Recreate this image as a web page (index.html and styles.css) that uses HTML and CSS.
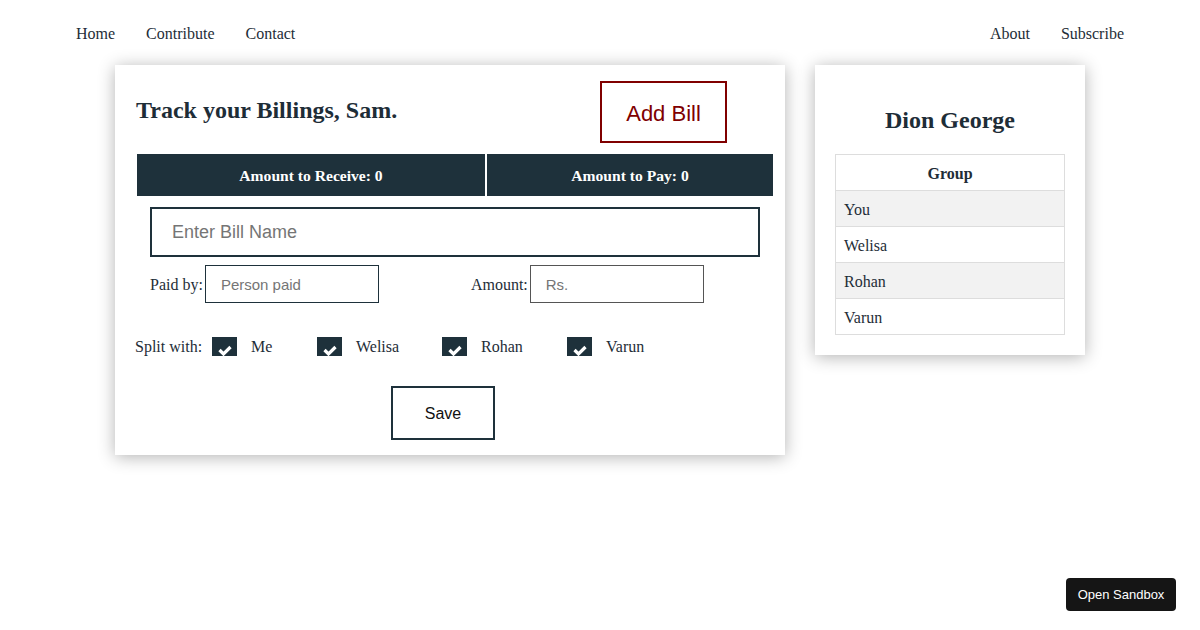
FILE: index.html
```html
<!DOCTYPE html>
<html lang="en">
  <head>
    <meta charset="UTF-8" />
    <meta name="viewport" content="width=device-width, initial-scale=1.0"/>
    <title>Split Bills</title>
    <link rel="stylesheet" href="styles.css">
  </head>
  <body>
    <nav class="nav">
      <div class="nav-group">
        <a href="#">Home</a>
        <a href="#">Contribute</a>
        <a href="#">Contact</a>
      </div>
      <div class="nav-group">
        <a href="#">About</a>
        <a href="#">Subscribe</a>
      </div>
    </nav>

    <div class="content">
      <div class="card card-main">
        <div class="head">
          <h2 class="title">Track your Billings, Sam.</h2>
          <button type="button" class="add-bill">Add Bill</button>
        </div>

        <div class="totals">
          <div class="total total-receive">Amount to Receive: 0</div>
          <div class="total total-pay">Amount to Pay: 0</div>
        </div>

        <input type="text" class="bill-name" placeholder="Enter Bill Name" />

        <div class="paid-row">
          <label class="field">Paid by: <input type="text" class="small-input" placeholder="Person paid" /></label>
          <label class="field field-amount">Amount: <input type="text" class="small-input light" placeholder="Rs." /></label>
        </div>

        <div class="split-row">
          <span class="split-label">Split with:</span>
          <div class="members">
            <label class="member"><span class="check"><svg width="25" height="19" viewBox="0 0 25 19"><rect width="25" height="19" fill="#1e313b"/><path d="M7.5 13 L11.5 17 L18.5 10" fill="none" stroke="#fff" stroke-width="3.2"/></svg></span>Me</label>
            <label class="member"><span class="check"><svg width="25" height="19" viewBox="0 0 25 19"><rect width="25" height="19" fill="#1e313b"/><path d="M7.5 13 L11.5 17 L18.5 10" fill="none" stroke="#fff" stroke-width="3.2"/></svg></span>Welisa</label>
            <label class="member"><span class="check"><svg width="25" height="19" viewBox="0 0 25 19"><rect width="25" height="19" fill="#1e313b"/><path d="M7.5 13 L11.5 17 L18.5 10" fill="none" stroke="#fff" stroke-width="3.2"/></svg></span>Rohan</label>
            <label class="member"><span class="check"><svg width="25" height="19" viewBox="0 0 25 19"><rect width="25" height="19" fill="#1e313b"/><path d="M7.5 13 L11.5 17 L18.5 10" fill="none" stroke="#fff" stroke-width="3.2"/></svg></span>Varun</label>
          </div>
        </div>

        <button type="button" class="save">Save</button>
      </div>

      <div class="card card-side">
        <h2 class="user-name">Dion George</h2>
        <table class="group">
          <tr><th>Group</th></tr>
          <tr><td>You</td></tr>
          <tr><td>Welisa</td></tr>
          <tr><td>Rohan</td></tr>
          <tr><td>Varun</td></tr>
        </table>
      </div>
    </div>

    <button type="button" class="sandbox">Open Sandbox</button>
  </body>
</html>
```

FILE: styles.css
```css
body {
  font-family: 'Liberation Serif', 'Times New Roman', serif;
  color: #1e2d37;
  background: white;
  margin: 0;
}

.nav {
  display: flex;
  justify-content: space-between;
  align-items: center;
  height: 68px;
  padding: 0 76px;
}

.nav-group {
  display: flex;
  gap: 31px;
}

.nav a {
  color: #1e2d37;
  text-decoration: none;
  font-size: 16px;
}

.content {
  display: flex;
  justify-content: center;
  align-items: flex-start;
  gap: 30px;
  margin-top: -3px;
  padding-bottom: 30px;
}

.card {
  background: white;
  box-sizing: border-box;
  box-shadow: 0 2px 16px rgba(0, 0, 0, 0.3);
}

.card-main {
  width: 670px;
  padding: 16px 12px 15px 20px;
}

.head {
  display: flex;
  justify-content: space-between;
  align-items: center;
  padding: 0 46px 0 1px;
}

.title {
  font-size: 24px;
  margin: 0 0 4px;
}

.add-bill {
  width: 127px;
  height: 62px;
  padding-top: 4px;
  background: white;
  border: 2px solid #800000;
  color: #800000;
  font-family: 'Liberation Sans', Arial, sans-serif;
  font-size: 22px;
  cursor: pointer;
}

.totals {
  display: flex;
  gap: 2px;
  margin: 11px 0 0 2px;
}

.total {
  height: 42px;
  line-height: 43px;
  background: #1e313b;
  color: white;
  font-weight: bold;
  font-size: 15.6px;
  text-align: center;
}

.total-receive {
  width: 348px;
}

.total-pay {
  width: 286px;
}

.bill-name {
  display: block;
  box-sizing: border-box;
  width: 610px;
  height: 50px;
  margin: 11px 0 0 15px;
  padding: 0 20px;
  border: 2px solid #1e313b;
  font-family: 'Liberation Sans', Arial, sans-serif;
  font-size: 18px;
  outline: none;
}

.bill-name::placeholder,
.small-input::placeholder {
  color: #757575;
}

.paid-row {
  display: flex;
  align-items: center;
  margin: 8px 0 0 15px;
}

.field {
  display: flex;
  align-items: baseline;
  gap: 2px;
  font-size: 16px;
}

.field-amount {
  margin-left: 92px;
}

.small-input {
  box-sizing: border-box;
  width: 174px;
  height: 38px;
  padding: 0 15px;
  border: 1px solid #1e313b;
  font-family: 'Liberation Sans', Arial, sans-serif;
  font-size: 15px;
  outline: none;
}

.small-input.light {
  border-color: #555;
}

.split-row {
  display: flex;
  align-items: center;
  margin-top: 34px;
  font-size: 16px;
  height: 19px;
}

.split-label {
  width: 77px;
}

.members {
  display: grid;
  grid-template-columns: 105px 125px 125px auto;
}

.member {
  display: flex;
  align-items: center;
}

.check {
  display: flex;
  margin-right: 14px;
}

.save {
  display: block;
  width: 104px;
  height: 54px;
  margin: 30px 0 0 256px;
  padding-top: 2px;
  background: white;
  border: 2px solid #1e313b;
  color: #111;
  font-family: 'Liberation Sans', Arial, sans-serif;
  font-size: 16px;
  cursor: pointer;
}

.card-side {
  width: 270px;
  padding: 20px 20px 20px;
}

.user-name {
  font-size: 24px;
  text-align: center;
  line-height: 28px;
  margin: 21px 0 20px;
}

.group {
  width: 230px;
  border-collapse: collapse;
  font-size: 16px;
}

.group th,
.group td {
  border: 1px solid #ddd;
  height: 36px;
  padding: 2px 8px 0;
  box-sizing: border-box;
}

.group tr:nth-child(even) {
  background: #f2f2f2;
}

.sandbox {
  position: fixed;
  right: 24px;
  bottom: 19px;
  width: 110px;
  height: 33px;
  background: #151515;
  color: white;
  border: none;
  border-radius: 4px;
  font-family: 'Liberation Sans', Arial, sans-serif;
  font-size: 13px;
}
```
